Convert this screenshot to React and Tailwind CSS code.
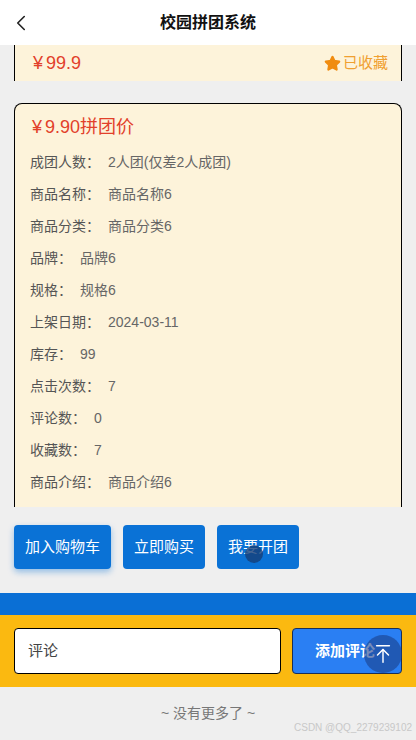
import { ChevronLeft, Star, ArrowUpToLine } from "lucide-react";

const details = [
  ["成团人数：", "2人团(仅差2人成团)"],
  ["商品名称：", "商品名称6"],
  ["商品分类：", "商品分类6"],
  ["品牌：", "品牌6"],
  ["规格：", "规格6"],
  ["上架日期：", "2024-03-11"],
  ["库存：", "99"],
  ["点击次数：", "7"],
  ["评论数：", "0"],
  ["收藏数：", "7"],
  ["商品介绍：", "商品介绍6"],
];

export default function App() {
  return (
    <div
      className="relative w-full h-[740px] overflow-hidden bg-[#efefef] flex flex-col"
      style={{ fontFamily: '"Liberation Sans", "Noto Sans CJK SC", sans-serif' }}
    >
      {/* Header */}
      <div className="relative h-[45px] shrink-0 bg-white flex items-center justify-center">
        <ChevronLeft size={26} strokeWidth={1.5} className="absolute left-[8px] text-[#222]" />
        <h1 className="text-[16px] font-bold text-[#111]">校园拼团系统</h1>
      </div>

      {/* Price strip */}
      <div className="mx-[14px] h-[36px] shrink-0 border-x border-black bg-[#fdf3da] flex items-center justify-between pl-[18px] pr-[13px]">
        <span className="text-[18px] text-[#e2402a]">
          <span className="mr-[3px]">¥</span>99.9
        </span>
        <span className="flex items-center gap-[2px] text-[15px] text-[#f0a030]">
          <Star size={17} fill="#f08c10" stroke="#f08c10" />
          已收藏
        </span>
      </div>

      {/* Group-buy card */}
      <div className="mx-[14px] mt-[22px] shrink-0 border border-b-0 border-black rounded-t-[8px] bg-[#fdf3da] px-[15px] pt-[9px] pb-[9px]">
        <div className="h-[28px] flex items-center pl-[2px] text-[18px] text-[#e2402a]">
          <span className="mr-[3px]">¥</span>9.90拼团价
        </div>
        <div className="mt-[5px]">
          {details.map(([label, value]) => (
            <div key={label} className="h-[32px] flex items-center text-[14px] text-[#555]">
              <span>{label}</span>
              <span className="ml-[8px] text-[#666]">{value}</span>
            </div>
          ))}
        </div>
      </div>

      {/* Actions */}
      <div className="relative flex gap-[12px] px-[14px] mt-[18px] shrink-0">
        <button className="h-[44px] px-[11px] rounded-[4px] bg-[#0a72d6] text-white text-[15px] shadow-[0_3px_6px_rgba(10,114,214,0.4)]">
          加入购物车
        </button>
        <button className="h-[44px] px-[11px] rounded-[4px] bg-[#0a72d6] text-white text-[15px]">
          立即购买
        </button>
        <button className="h-[44px] px-[11px] rounded-[4px] bg-[#0a72d6] text-white text-[15px]">
          我要开团
        </button>
        <span className="absolute left-[245px] top-[20px] w-[18px] h-[18px] rounded-full bg-[#153f78]/80" />
      </div>

      {/* Blue bar */}
      <div className="mt-[24px] h-[22px] shrink-0 bg-[#0a6fd5]" />

      {/* Comment bar */}
      <div className="relative h-[72px] shrink-0 bg-[#fbb910] flex items-center gap-[11px] px-[14px]">
        <div className="flex-1 h-[46px] bg-white border border-black rounded-[4px] flex items-center px-[13px] text-[15px] text-[#444]">
          评论
        </div>
        <button className="w-[110px] h-[46px] bg-[#2a7ff3] border border-[#1b2f55] rounded-[4px] text-white text-[15px] font-bold text-center pr-[4px]">
          添加评论
        </button>
        <span className="absolute right-[14px] top-[20px] w-[38px] h-[38px] rounded-full bg-[#1a3f8a]/60 flex items-center justify-center">
          <ArrowUpToLine size={22} strokeWidth={1.6} className="text-white" />
        </span>
      </div>

      {/* Footer */}
      <div className="relative flex-1 bg-[#efefef] flex justify-center pt-[16px]">
        <span className="text-[14px] text-[#777]">~ 没有更多了 ~</span>
        <span className="absolute right-[4px] bottom-[5px] text-[10px] text-[#c8c8c8]">CSDN @QQ_2279239102</span>
      </div>
    </div>
  );
}
